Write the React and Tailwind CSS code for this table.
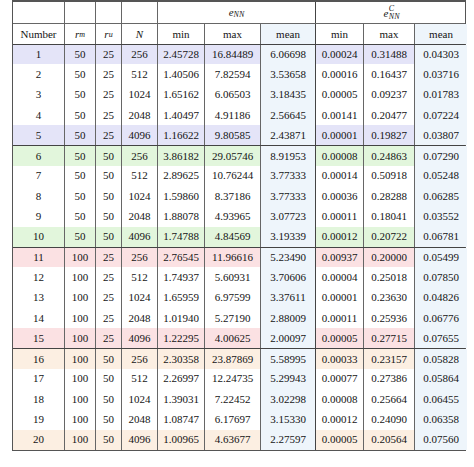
import React from "react";

const rows = [
  ["1", "50", "25", "256", "2.45728", "16.84489", "6.06698", "0.00024", "0.31488", "0.04303"],
  ["2", "50", "25", "512", "1.40506", "7.82594", "3.53658", "0.00016", "0.16437", "0.03716"],
  ["3", "50", "25", "1024", "1.65162", "6.06503", "3.18435", "0.00005", "0.09237", "0.01783"],
  ["4", "50", "25", "2048", "1.40497", "4.91186", "2.56645", "0.00141", "0.20477", "0.07224"],
  ["5", "50", "25", "4096", "1.16622", "9.80585", "2.43871", "0.00001", "0.19827", "0.03807"],
  ["6", "50", "50", "256", "3.86182", "29.05746", "8.91953", "0.00008", "0.24863", "0.07290"],
  ["7", "50", "50", "512", "2.89625", "10.76244", "3.77333", "0.00014", "0.50918", "0.05248"],
  ["8", "50", "50", "1024", "1.59860", "8.37186", "3.77333", "0.00036", "0.28288", "0.06285"],
  ["9", "50", "50", "2048", "1.88078", "4.93965", "3.07723", "0.00011", "0.18041", "0.03552"],
  ["10", "50", "50", "4096", "1.74788", "4.84569", "3.19339", "0.00012", "0.20722", "0.06781"],
  ["11", "100", "25", "256", "2.76545", "11.96616", "5.23490", "0.00937", "0.20000", "0.05499"],
  ["12", "100", "25", "512", "1.74937", "5.60931", "3.70606", "0.00004", "0.25018", "0.07850"],
  ["13", "100", "25", "1024", "1.65959", "6.97599", "3.37611", "0.00001", "0.23630", "0.04826"],
  ["14", "100", "25", "2048", "1.01940", "5.27190", "2.88009", "0.00011", "0.25936", "0.06776"],
  ["15", "100", "25", "4096", "1.22295", "4.00625", "2.00097", "0.00005", "0.27715", "0.07655"],
  ["16", "100", "50", "256", "2.30358", "23.87869", "5.58995", "0.00033", "0.23157", "0.05828"],
  ["17", "100", "50", "512", "2.26997", "12.24735", "5.29943", "0.00077", "0.27386", "0.05864"],
  ["18", "100", "50", "1024", "1.39031", "7.22452", "3.02298", "0.00008", "0.25664", "0.06455"],
  ["19", "100", "50", "2048", "1.08747", "6.17697", "3.15330", "0.00012", "0.24090", "0.06358"],
  ["20", "100", "50", "4096", "1.00965", "4.63677", "2.27597", "0.00005", "0.20564", "0.07560"],
];

const hl = ["bg-[#e4e4f8]", "bg-[#e2f6dc]", "bg-[#fbe1e3]", "bg-[#fcefe2]"];

const grid =
  "grid grid-cols-[52px_31px_26px_36px_47px_56px_55px_48px_51px_52px]";

function cellBorder(i) {
  if (i === 9) return "";
  if (i === 6) return "border-r border-[#444]";
  return "border-r border-[#666]";
}

function DataRow({ r, idx }) {
  const group = Math.floor(idx / 5);
  const pos = idx % 5;
  const highlighted = pos === 0 || pos === 4;
  return (
    <div
      className={`${grid} h-[20.3px] ${
        pos === 0 ? "border-t border-[#444]" : ""
      }`}
    >
      {r.map((v, i) => {
        const isMean = i === 6 || i === 9;
        const bg = isMean ? "bg-[#eef5fb]" : highlighted ? hl[group] : "";
        return (
          <div
            key={i}
            className={`flex items-center justify-center ${cellBorder(i)} ${bg}`}
          >
            {v}
          </div>
        );
      })}
    </div>
  );
}

export default function App() {
  return (
    <div className="w-[474px] h-[467px] bg-white text-[#141414] text-[11px] font-serif leading-none">
      <div className="ml-[12px] w-[454px] border-l border-r border-t-2 border-b border-[#555] font-['Liberation_Serif']">
        {/* header row 1 */}
        <div className={`${grid} h-[22px] border-b border-[#666]`}>
          <div className="border-r border-[#666]" />
          <div className="border-r border-[#666]" />
          <div className="border-r border-[#666]" />
          <div className="border-r border-[#666]" />
          <div className="col-span-3 flex items-center justify-center border-r border-[#444]">
            <span className="italic">
              e<sub className="text-[8px] relative top-[1px]">NN</sub>
            </span>
          </div>
          <div className="col-span-3 flex items-center justify-center">
            <span className="italic inline-flex items-center">
              <span className="relative top-[1px]">e</span>
              <span className="inline-flex flex-col text-[8px] leading-[8px] ml-[0.5px]">
                <span>C</span>
                <span>NN</span>
              </span>
            </span>
          </div>
        </div>
        {/* header row 2 */}
        <div className={`${grid} h-[20px]`}>
          <div className="flex items-center justify-center border-r border-[#666]">
            Number
          </div>
          <div className="flex items-center justify-center border-r border-[#666] italic">
            r<sub className="text-[8px] relative top-[1px]">m</sub>
          </div>
          <div className="flex items-center justify-center border-r border-[#666] italic">
            r<sub className="text-[8px] relative top-[1px]">u</sub>
          </div>
          <div className="flex items-center justify-center border-r border-[#666] italic">
            N
          </div>
          <div className="flex items-center justify-center border-r border-[#666]">
            min
          </div>
          <div className="flex items-center justify-center border-r border-[#666]">
            max
          </div>
          <div className="flex items-center justify-center border-r border-[#444] bg-[#eef5fb]">
            mean
          </div>
          <div className="flex items-center justify-center border-r border-[#666]">
            min
          </div>
          <div className="flex items-center justify-center border-r border-[#666]">
            max
          </div>
          <div className="flex items-center justify-center bg-[#eef5fb]">
            mean
          </div>
        </div>
        {rows.map((r, idx) => (
          <DataRow key={idx} r={r} idx={idx} />
        ))}
      </div>
    </div>
  );
}
